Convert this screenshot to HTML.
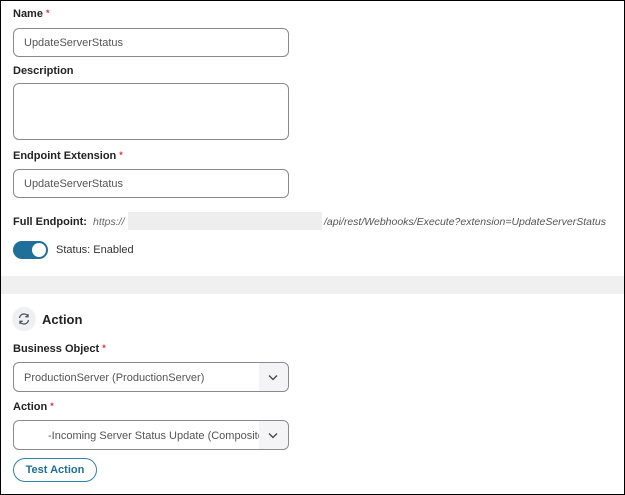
<!DOCTYPE html>
<html><head><style>
body{margin:0;width:625px;height:495px;overflow:hidden;background:#fff;font-family:"Liberation Sans",sans-serif;}
.frame{position:absolute;left:0;top:0;width:623px;height:493px;border:1px solid #000;}
.a{position:absolute;}
.lbl{font-size:11px;font-weight:bold;color:#222;}
.lbl i{color:#d33;font-style:normal;margin-left:3px;font-size:9px;vertical-align:top}
.inp{border:1px solid #8a8a8a;border-radius:6px;box-sizing:border-box;left:13px;width:276px;font-size:11px;color:#555;padding-left:10px;}
.dd{position:absolute;right:0;top:0;bottom:0;width:29px;background:#f4f4f6;border-radius:0 6px 6px 0;}
</style></head><body>
<div class="frame"></div>
<div class="a lbl" style="left:13px;top:8px">Name<i>*</i></div>
<div class="a inp" style="top:28px;height:29px;line-height:29px">UpdateServerStatus</div>
<div class="a lbl" style="left:13px;top:65px">Description</div>
<div class="a inp" style="top:83px;height:57px"></div>
<div class="a lbl" style="left:13px;top:150px">Endpoint Extension<i>*</i></div>
<div class="a inp" style="top:169px;height:29px;line-height:29px">UpdateServerStatus</div>
<div class="a lbl" style="left:13px;top:216px">Full Endpoint:</div>
<div class="a" style="left:93px;top:216px;font-size:10.5px;font-style:italic;color:#666">https://</div>
<div class="a" style="left:128px;top:212px;width:194px;height:18px;background:#eeeeee"></div>
<div class="a" style="left:324px;top:216px;font-size:10.5px;font-style:italic;color:#555">/api/rest/Webhooks/Execute?extension=UpdateServerStatus</div>
<div class="a" style="left:13px;top:241px;width:35px;height:18px;border-radius:9px;background:#1f6f9a"></div>
<div class="a" style="left:32px;top:243px;width:14px;height:14px;border-radius:7px;background:#fff"></div>
<div class="a" style="left:56px;top:244px;font-size:11px;color:#333">Status: Enabled</div>
<div class="a" style="left:1px;top:276px;width:623px;height:18px;background:#f0f0f0"></div>
<div class="a" style="left:12px;top:307px;width:24px;height:24px;border-radius:12px;background:#eef0f3"></div>
<svg class="a" style="left:17px;top:312px" width="14" height="14" viewBox="0 0 14 14" fill="none" stroke="#555" stroke-width="1.3"><path d="M2.5 6A4.5 4.5 0 0 1 11 4.5M11.5 8A4.5 4.5 0 0 1 3 9.5"/><path d="M11 2v2.7H8.3M3 12V9.3h2.7"/></svg>
<div class="a" style="left:42px;top:312px;font-size:13px;font-weight:bold;color:#222">Action</div>
<div class="a lbl" style="left:13px;top:343px">Business Object<i>*</i></div>
<div class="a inp" style="top:362px;height:30px;line-height:30px">ProductionServer (ProductionServer)<div class="dd"><svg style="position:absolute;left:9px;top:11px" width="10" height="7" viewBox="0 0 10 7" fill="none" stroke="#444" stroke-width="1.3"><path d="M1 1.5l4 4 4-4"/></svg></div></div>
<div class="a lbl" style="left:13px;top:401px">Action<i>*</i></div>
<div class="a inp" style="top:420px;height:30px;line-height:30px;padding-left:34px;overflow:hidden;white-space:nowrap">-Incoming Server Status Update (Composite<div class="dd"><svg style="position:absolute;left:9px;top:11px" width="10" height="7" viewBox="0 0 10 7" fill="none" stroke="#444" stroke-width="1.3"><path d="M1 1.5l4 4 4-4"/></svg></div></div>
<div class="a" style="left:13px;top:458px;width:84px;height:24px;box-sizing:border-box;border:1.5px solid #2d82ab;border-radius:12px;text-align:center;line-height:23px;font-size:11px;font-weight:bold;color:#1f6f9a">Test Action</div>
</body></html>
